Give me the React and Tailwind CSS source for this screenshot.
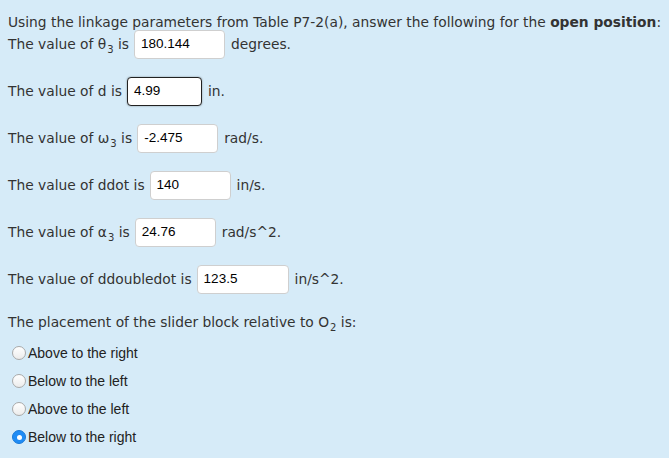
const Sub = ({ children }) => (
  <sub className="text-[10px] relative top-[4px] align-baseline ml-[1px]">{children}</sub>
);

const rows = [
  { label: <>The value of θ<Sub>3</Sub> is</>, value: "180.144", w: "w-[91px]", unit: "degrees." },
  { label: <>The value of d is</>, value: "4.99", w: "w-[75px]", unit: "in.", focus: true },
  { label: <>The value of ω<Sub>3</Sub> is</>, value: "-2.475", w: "w-[81px]", unit: "rad/s." },
  { label: <>The value of ddot is</>, value: "140", w: "w-[81px]", unit: "in/s." },
  { label: <>The value of α<Sub>3</Sub> is</>, value: "24.76", w: "w-[81px]", unit: "rad/s^2." },
  { label: <>The value of ddoubledot is</>, value: "123.5", w: "w-[92px]", unit: "in/s^2." },
];

const options = [
  { text: "Above to the right" },
  { text: "Below to the left" },
  { text: "Above to the left" },
  { text: "Below to the right", checked: true },
];

function Radio({ checked }) {
  if (checked) {
    return (
      <span className="w-[14px] h-[14px] rounded-full bg-[#1f8cf5] border border-[#1a7ad8] flex items-center justify-center shrink-0">
        <span className="w-[5px] h-[5px] rounded-full bg-white"></span>
      </span>
    );
  }
  return (
    <span className="w-[14px] h-[14px] rounded-full bg-gradient-to-b from-white to-[#ececec] border border-[#a9a9a9] shrink-0"></span>
  );
}

export default function App() {
  return (
    <div className="w-[669px] h-[458px] bg-[#d6ebf8] text-[#333] px-[8px] text-[13.8px] overflow-hidden" style={{ fontFamily: '"DejaVu Sans", Verdana, sans-serif' }}>
      <div className="pt-[15px] leading-[15px] whitespace-nowrap">
        Using the linkage parameters from Table P7-2(a), answer the following for the <b>open position</b>:
      </div>

      <div className="flex flex-col gap-[18px]">
        {rows.map((r, i) => (
          <div key={i} className="flex items-center h-[29px] whitespace-nowrap">
            <span>{r.label}</span>
            <div
              className={`${r.w} h-[29px] ml-[5px] mr-[6px] bg-white rounded-[4px] flex items-center px-[6px] text-[13.5px] text-black ${
                r.focus ? "border-[1.5px] border-[#222] shadow-[0_0_2px_rgba(0,0,0,0.4)]" : "border border-[#cfcfcf]"
              }`}
              style={{ fontFamily: '"Liberation Sans", Arial, sans-serif' }}
            >
              {r.value}
            </div>
            <span>{r.unit}</span>
          </div>
        ))}
      </div>

      <div className="mt-[20px] leading-[16px] whitespace-nowrap">
        The placement of the slider block relative to O<Sub>2</Sub> is:
      </div>

      <div className="mt-[9px] flex flex-col" style={{ fontFamily: '"Liberation Sans", Arial, sans-serif' }}>
        {options.map((o, i) => (
          <div key={i} className="flex items-center h-[28px] pl-[4px] text-[14px] text-[#222]">
            <Radio checked={o.checked} />
            <span className="ml-[2px]">{o.text}</span>
          </div>
        ))}
      </div>
    </div>
  );
}
